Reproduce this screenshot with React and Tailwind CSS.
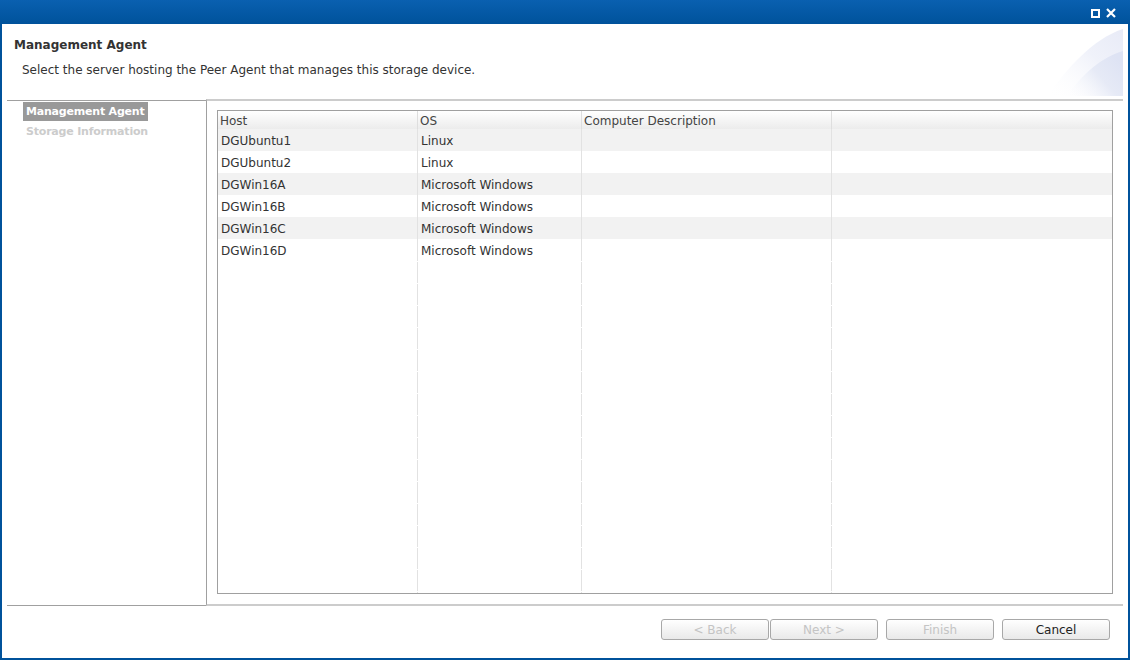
import React from "react";

const rows = [
  { host: "DGUbuntu1", os: "Linux" },
  { host: "DGUbuntu2", os: "Linux" },
  { host: "DGWin16A", os: "Microsoft Windows" },
  { host: "DGWin16B", os: "Microsoft Windows" },
  { host: "DGWin16C", os: "Microsoft Windows" },
  { host: "DGWin16D", os: "Microsoft Windows" },
];

const filler = Array.from({ length: 16 });

function HeaderArt() {
  return (
    <svg className="absolute right-[5px] top-[5px]" width="76" height="67" viewBox="0 0 76 67">
      <defs>
        <linearGradient id="ga" x1="0" y1="1" x2="1" y2="0">
          <stop offset="0" stopColor="#ffffff" stopOpacity="0" />
          <stop offset="0.6" stopColor="#f0f2fa" />
          <stop offset="1" stopColor="#e8ebf7" />
        </linearGradient>
        <linearGradient id="gb" x1="0" y1="1" x2="1" y2="0.3">
          <stop offset="0" stopColor="#ffffff" stopOpacity="0" />
          <stop offset="0.6" stopColor="#e6eaf6" />
          <stop offset="1" stopColor="#dee3f4" />
        </linearGradient>
      </defs>
      <path d="M0 67 C20 40 45 10 76 0 L76 67 Z" fill="url(#ga)" />
      <path d="M20 67 C35 45 55 28 76 22 L76 67 Z" fill="url(#gb)" />
    </svg>
  );
}

function Btn({ children, disabled }) {
  return (
    <button
      className={
        "w-[108px] h-[21px] rounded-[3px] border border-[#a8a8a8] bg-gradient-to-b from-white to-[#e9e9e9] text-[12px] leading-none " +
        (disabled ? "text-[#c4c4c4]" : "text-[#222]")
      }
    >
      {children}
    </button>
  );
}

export default function App() {
  return (
    <div
      className="w-[1130px] h-[660px] flex flex-col bg-[#00529b] text-[#333] overflow-hidden"
      style={{ fontFamily: '"DejaVu Sans", Verdana, sans-serif' }}
    >
      <div className="h-[24px] shrink-0 flex items-center justify-end gap-[6px] pr-[14px] bg-gradient-to-b from-[#0a60b0] to-[#00529b]">
        <span className="w-[9px] h-[9px] border-2 border-white mt-[2px]" />
        <svg width="10" height="10" viewBox="0 0 10 10" className="mt-[2px]">
          <path d="M1 1 L9 9 M9 1 L1 9" stroke="white" strokeWidth="2.2" />
        </svg>
      </div>
      <div className="flex-1 mx-[2px] mb-[2px] bg-white flex flex-col">
        <div className="relative h-[75px] shrink-0 pl-[12px]">
          <HeaderArt />
          <div className="pt-[12px] text-[12px] font-bold text-[#333]">Management Agent</div>
          <div className="pt-[7px] pl-[8px] text-[12px] text-[#333]">
            Select the server hosting the Peer Agent that manages this storage device.
          </div>
        </div>
        <div className="flex mx-[5px] h-[507px] shrink-0">
          <div className="w-[199px] shrink-0 mt-[1px] border-t border-b border-[#a0a0a0] pt-[1px] pl-[16px] text-[11px] font-bold tracking-[-0.2px]">
            <div className="inline-block bg-[#999999] text-white px-[3px] h-[19px] leading-[19px]">Management Agent</div>
            <div className="text-[#cccccc] px-[3px] mt-[1px] leading-[19px]">Storage Information</div>
          </div>
          <div className="flex-1 border-l border-l-[#a0a0a0] border-t-2 border-b-2 border-[#cccccc] p-[10px] pt-[9px] pb-[10px]">
            <div className="h-full border border-[#a0a0a0] overflow-hidden text-[12px]">
              <div className="flex h-[18px] bg-gradient-to-b from-white to-[#ececec] text-[#444] leading-[20px]">
                <div className="w-[200px] pl-[2px] border-r border-[#dedede]">Host</div>
                <div className="w-[164px] pl-[2px] border-r border-[#dedede]">OS</div>
                <div className="w-[250px] pl-[2px] border-r border-[#dedede]">Computer Description</div>
                <div className="flex-1" />
              </div>
              {rows.map((r, i) => (
                <div key={r.host} className={"flex h-[22px] leading-[24px] " + (i % 2 === 0 ? "bg-[#f2f2f2]" : "bg-white")}>
                  <div className="w-[200px] pl-[3px] border-r border-[#e2e2e2]">{r.host}</div>
                  <div className="w-[164px] pl-[3px] border-r border-[#e2e2e2]">{r.os}</div>
                  <div className="w-[250px] border-r border-[#e2e2e2]" />
                  <div className="flex-1" />
                </div>
              ))}
              {filler.map((_, i) => (
                <div key={i} className="flex h-[22px]">
                  <div className="w-[200px] flex justify-end">
                    <div className="w-px h-[21px] mt-px bg-[#e2e2e2]" />
                  </div>
                  <div className="w-[164px] flex justify-end">
                    <div className="w-px h-[21px] mt-px bg-[#e2e2e2]" />
                  </div>
                  <div className="w-[250px] flex justify-end">
                    <div className="w-px h-[21px] mt-px bg-[#e2e2e2]" />
                  </div>
                  <div className="flex-1" />
                </div>
              ))}
            </div>
          </div>
        </div>
        <div className="flex-1 flex justify-end items-start pt-[13px] pr-[18px]">
          <div className="flex">
            <Btn disabled>&lt; Back</Btn>
            <div className="w-px" />
            <Btn disabled>Next &gt;</Btn>
            <div className="w-[8px]" />
            <Btn disabled>Finish</Btn>
            <div className="w-[8px]" />
            <Btn>Cancel</Btn>
          </div>
        </div>
      </div>
    </div>
  );
}
